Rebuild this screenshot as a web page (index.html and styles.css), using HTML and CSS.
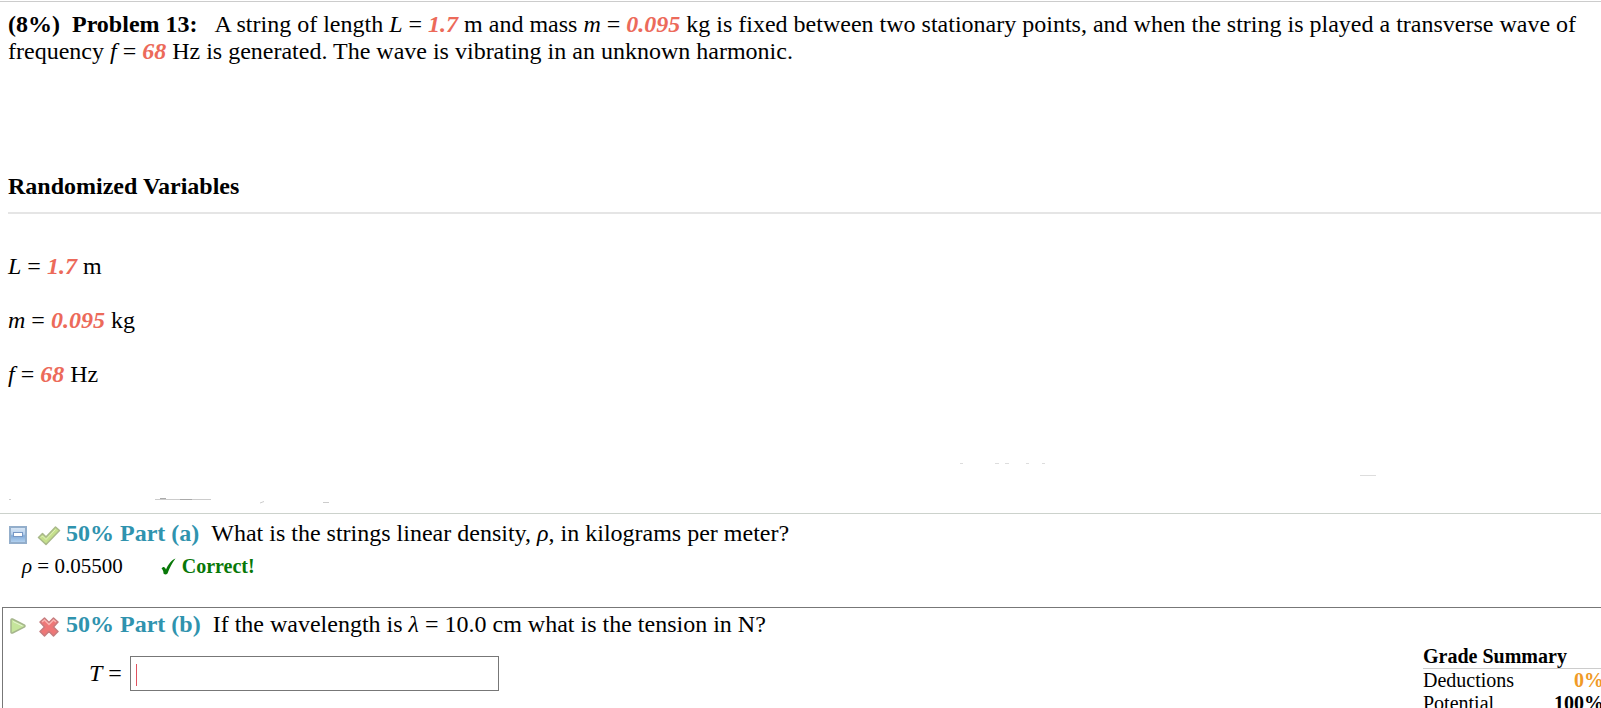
FILE: index.html
```html
<!DOCTYPE html>
<html lang="en">
<head>
    <meta charset="utf-8">
    <title>Problem 13</title>
    <link rel="stylesheet" href="styles.css">
</head>
<body>
    <div class="problem">
        <p class="statement"><b class="number">(8%)&nbsp; Problem 13:</b>A string of length <i>L</i> = <em class="value">1.7</em> m and mass <i>m</i> = <em class="value">0.095</em> kg is fixed between two stationary points, and when the string is played a transverse wave of frequency <i>f</i> = <em class="value">68</em> Hz is generated. The wave is vibrating in an unknown harmonic.</p>
        <h2>Randomized Variables</h2>
        <div class="variables">
            <p><i>L</i> = <em class="value">1.7</em> m</p>
            <p><i>m</i> = <em class="value">0.095</em> kg</p>
            <p><i>f</i> = <em class="value">68</em> Hz</p>
        </div>
        <!-- faint specks above the first part -->
        <svg class="specks" aria-hidden="true">
            <g fill="none" stroke="#ddd">
                <path d="M960 24.500h3M995 24.500h4M1005 24.500h4M1026 24.500h3M1042 24.500h3M1360 36.500h16"/>
                <path d="M9 60.500h2M155 60.500h56M260 64l4-1.500M323 63.500h6" stroke="#ccc"/>
                <path d="M160 59.500h6M180 60.500h12" stroke="#aaa"/>
                <path d="M1596 28.500h4M1598.500 29v3M1597 36.500h4M1600.500 37v2l-3 1" stroke="#aaa"/>
            </g>
        </svg>
    </div>

    <div class="part">
        <div class="part-title">
            <button type="button" class="icon-btn" aria-label="Collapse part a">
                <svg width="18" height="18" viewBox="0 0 18 18">
                    <defs>
                        <linearGradient id="blue" x1="0" y1="0" x2="0" y2="1">
                            <stop offset="0" stop-color="#dce9f7"/>
                            <stop offset=".45" stop-color="#b5cfec"/>
                            <stop offset=".55" stop-color="#82abd9"/>
                            <stop offset="1" stop-color="#b9d6f2"/>
                        </linearGradient>
                    </defs>
                    <rect x="1" y="1" width="16" height="16" fill="url(#blue)" stroke="#93aecb" stroke-width="2"/>
                    <rect x="4.500" y="6.500" width="9" height="4" fill="#fff" stroke="#7797c4"/>
                </svg>
            </button>
            <svg class="status" width="24" height="20" viewBox="0 0 24 20">
                <path d="M1.500 11.500L5.500 7.500L9 11L18.500 1L22.500 4.500L9 18.500Z" fill="#c5e08b" stroke="#a9b98a" stroke-width="1.500" stroke-linejoin="round"/>
                <path d="M4 11.500L5.500 10L9 13.500L18.500 3.500" fill="none" stroke="#e2f1bd"/>
            </svg>
            <b class="part-name">50% Part (a)</b>
            <span>What is the strings linear density, <i>ρ</i>, in kilograms per meter?</span>
        </div>
        <div class="answer">
            <span class="result"><i>ρ</i> = 0.05500</span>
            <b class="correct">
                <svg width="15" height="17" viewBox="0 0 15 17">
                    <path d="M.5 10.500C2 8 4 8.500 5 11.500C7 7 10 2 14.500.5C11 5 8.500 10 6.500 15.500C5 16.700 4 16.700 2.500 15.500C2.500 13 1.500 11.500.5 10.500Z" fill="#087808"/>
                </svg>
                Correct!
            </b>
        </div>
    </div>

    <div class="part current">
        <div class="part-title">
            <button type="button" class="icon-btn" aria-label="Part b">
                <svg width="18" height="18" viewBox="0 0 18 18">
                    <path d="M2 3Q2 1.500 3.500 2L15.500 8Q16.500 9 15.500 10L3.500 16Q2 16.500 2 15Z" fill="#c5e59b" stroke="#a5b58c" stroke-width="1.500"/>
                    <path d="M4 4.500L13.500 9" stroke="#e7f4d2"/>
                </svg>
            </button>
            <svg class="status" width="24" height="20" viewBox="0 0 24 20">
                <path d="M7.500 1L12 5.500L16.500 1L21 5L16.500 10L21 14.500L16.500 19L12 14.500L7.500 19L3 14.500L7.500 10L3 5Z" fill="#ee7777" stroke="#c67c7e" stroke-width="1.500" stroke-linejoin="round"/>
                <path d="M5 5L7.500 3L12 7.500L16.500 3L19 5" fill="none" stroke="#f9b5b1" stroke-width="1.500"/>
            </svg>
            <b class="part-name">50% Part (b)</b>
            <span>If the wavelength is <i>λ</i> = 10.0 cm what is the tension in N?</span>
        </div>
        <div class="work">
            <div class="entry">
                <label for="tension"><i>T</i> =</label>
                <div class="field">
                    <input type="text" id="tension" autocomplete="off">
                </div>
            </div>
            <table class="grades">
                <caption>Grade Summary</caption>
                <tr>
                    <th>Deductions</th>
                    <td class="deduction">0%</td>
                </tr>
                <tr>
                    <th>Potential</th>
                    <td>100%</td>
                </tr>
            </table>
        </div>
    </div>
</body>
</html>
```

FILE: styles.css
```css
body {
    margin: 0;
    padding-top: 1px;
    background: #fff;
    color: #000;
    font-family: "Liberation Serif", "Times New Roman", serif;
    font-size: 24px;
    line-height: 27px;
    overflow: hidden;
}
p {
    margin: 0;
}
.problem {
    border-top: 1px solid #ccc;
    padding: 9px 0 0 8px;
}
.statement {
    padding-right: 16px;
}
.number {
    margin-right: 17px;
}
.value {
    color: #ec6a5a;
    font-weight: bold;
}
h2 {
    margin: 108px 0 0;
    padding-bottom: 12px;
    border-bottom: 2px solid #e5e5e5;
    font-size: 24px;
    line-height: 27px;
}
.variables {
    display: flex;
    flex-direction: column;
    gap: 27px;
    margin-top: 39px;
}
.specks {
    display: block;
    width: 100%;
    height: 66px;
    margin: 51px 0 8px -8px;
    padding-right: 8px;
}

/* question parts */
.part {
    height: 94px;
    border-top: 1px solid #ccd2cc;
    box-sizing: border-box;
}
.part-title {
    display: flex;
    align-items: center;
    padding: 6px 0 0 9px;
    white-space: nowrap;
}
.icon-btn {
    display: flex;
    padding: 3px 0 0;
    border: none;
    background: none;
    cursor: pointer;
}
.status {
    margin: 4px 5px 0 10px;
}
.part-name {
    margin-right: 12px;
    color: #2f93ae;
}
.answer {
    display: flex;
    gap: 38px;
    padding: 7px 0 0 22px;
    font-size: 20px;
    line-height: 24px;
}
.result {
    font-size: 21px;
}
.correct {
    display: flex;
    align-items: center;
    gap: 6px;
    color: #087808;
}
.current {
    height: auto;
    margin-left: 2px;
    border-top: 1px solid #777;
    border-left: 1px solid #777;
}
.current .part-title {
    padding: 3px 0 0 6px;
}
.work {
    display: flex;
    justify-content: space-between;
    padding-bottom: 20px;
}
.entry {
    display: flex;
    align-items: center;
    align-self: flex-start;
    gap: 8px;
    padding: 18px 0 0 86px;
}
.field {
    position: relative;
}
.field::before {
    content: "";
    position: absolute;
    left: 6px;
    top: 8px;
    width: 1px;
    height: 22px;
    background: #e0525f;
}
.field input {
    display: block;
    box-sizing: border-box;
    width: 369px;
    height: 35px;
    padding: 0 8px;
    border: 1px solid #777;
    font: inherit;
}

/* grades */
.grades {
    width: 181px;
    margin: 7px -3px 0 0;
    border-collapse: collapse;
    font-size: 20px;
    line-height: 23px;
}
.grades caption {
    border-bottom: 1px solid #ccc;
    font-weight: bold;
    text-align: left;
}
.grades th {
    padding: 0;
    font-weight: normal;
    text-align: left;
}
.grades td {
    padding: 0;
    font-weight: bold;
    text-align: right;
}
.grades .deduction {
    color: #f09a26;
}
```
